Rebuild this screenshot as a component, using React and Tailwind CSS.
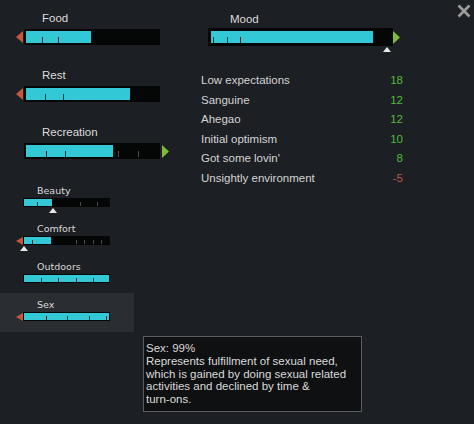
import React from "react";

const SANS = { fontFamily: '"Liberation Sans", Arial, sans-serif' };
const SMALL = { fontFamily: '"DejaVu Sans", Tahoma, sans-serif' };

const bigNeeds = [
  { label: "Food", fill: 65, ticks: [18, 34], arrow: "down" },
  { label: "Rest", fill: 104, ticks: [21, 39], arrow: "down" },
  { label: "Recreation", fill: 87, ticks: [22, 41, 94, 114], arrow: "up" },
];

const smallNeeds = [
  { label: "Beauty", fill: 28, ticks: [14, 57, 74], marker: 29 },
  { label: "Comfort", fill: 27, ticks: [9, 53, 61, 70, 78], marker: 0, arrow: "down" },
  { label: "Outdoors", fill: 85, ticks: [18, 35, 53, 70] },
  { label: "Sex", fill: 85, ticks: [23, 44, 66, 83], arrow: "down", active: true },
];

const thoughts = [
  ["Low expectations", 18],
  ["Sanguine", 12],
  ["Ahegao", 12],
  ["Initial optimism", 10],
  ["Got some lovin'", 8],
  ["Unsightly environment", -5],
];

function LeftArrow({ h }) {
  return (
    <svg width="7" height={h} viewBox={`0 0 7 ${h}`} className="block">
      <polygon points={`7,0 7,${h} 0,${h / 2}`} fill="#c9553f" />
    </svg>
  );
}

function RightArrow({ h }) {
  return (
    <svg width="7" height={h} viewBox={`0 0 7 ${h}`} className="block">
      <polygon points={`0,0 0,${h} 7,${h / 2}`} fill="#7cbb3c" />
    </svg>
  );
}

function Marker({ left, top }) {
  return (
    <svg
      width="8"
      height="5"
      viewBox="0 0 8 5"
      className="absolute"
      style={{ left: left - 4, top }}
    >
      <polygon points="4,0 8,5 0,5" fill="#e8e8e8" />
    </svg>
  );
}

function Bar({ w, h, inset, fill, ticks, tickH, marker }) {
  return (
    <div className="relative bg-[#050606]" style={{ width: w, height: h }}>
      <div
        className="absolute bg-[#32c8d6]"
        style={{ left: inset, top: inset, bottom: inset, width: fill }}
      />
      {ticks.map((t) => (
        <div
          key={t}
          className={`absolute w-px ${t < fill + inset ? "bg-[#0b2a2e]" : "bg-[#4a4c4e]"}`}
          style={{ left: t, bottom: inset, height: tickH }}
        />
      ))}
      {marker !== undefined && <Marker left={marker + inset} top={h + 1} />}
    </div>
  );
}

function BigNeed({ need }) {
  return (
    <div className="h-[57px] pt-[11px]">
      <div className="pl-[42px] h-[14px] leading-[14px] text-[11.5px] text-[#dcdcdc]" style={SANS}>
        {need.label}
      </div>
      <div className="mt-[4px] flex items-center">
        <div className="w-[24px] flex justify-end pr-[1px]">
          {need.arrow === "down" && <LeftArrow h={12} />}
        </div>
        <Bar w={136} h={16} inset={2} fill={need.fill} ticks={need.ticks} tickH={6} />
        <div className="pl-[2px]">{need.arrow === "up" && <RightArrow h={13} />}</div>
      </div>
    </div>
  );
}

function SmallNeed({ need }) {
  return (
    <div
      className={`h-[38px] pt-[6px] ${need.active ? "w-[134px] h-[39px] bg-[#2a2d31]" : ""}`}
    >
      <div className="pl-[37px] h-[11px] leading-[11px] text-[9.5px] text-[#dadada]" style={SMALL}>
        {need.label}
      </div>
      <div className="mt-[2px] flex items-center">
        <div className="w-[23px] flex justify-end">
          {need.arrow === "down" && <LeftArrow h={8} />}
        </div>
        <Bar
          w={87}
          h={9}
          inset={1}
          fill={need.fill}
          ticks={need.ticks}
          tickH={4}
          marker={need.marker}
        />
      </div>
    </div>
  );
}

export default function App() {
  return (
    <div className="w-[474px] h-[424px] bg-[#1c1f23] relative overflow-hidden flex" style={SANS}>
      {/* Needs column */}
      <div className="w-[190px] shrink-0">
        {bigNeeds.map((n) => (
          <BigNeed key={n.label} need={n} />
        ))}
        <div className="h-[8px]" />
        {smallNeeds.map((n) => (
          <SmallNeed key={n.label} need={n} />
        ))}
      </div>

      {/* Mood column */}
      <div className="pt-[12px] pl-[11px]">
        <div className="pl-[29px] h-[14px] leading-[14px] text-[11.5px] text-[#dcdcdc]">Mood</div>
        <div className="mt-[2px] ml-[7px] flex items-center">
          <Bar w={185} h={18} inset={3} fill={162} ticks={[5, 19, 32]} tickH={6} marker={176} />
          <RightArrow h={13} />
        </div>

        <div className="mt-[25px] w-[202px]">
          {thoughts.map(([t, v]) => (
            <div
              key={t}
              className="flex justify-between h-[19.6px] leading-[19.6px] text-[11.5px] text-[#d4d4d4]"
            >
              <span>{t}</span>
              <span className={v < 0 ? "text-[#b9584b]" : "text-[#52ba3c]"}>{v}</span>
            </div>
          ))}
        </div>
      </div>

      {/* Close */}
      <svg width="14" height="14" viewBox="0 0 14 14" className="absolute left-[457px] top-[4px]">
        <path d="M1.5 1.5 L12.5 12.5 M12.5 1.5 L1.5 12.5" stroke="#9c9c9c" strokeWidth="2.6" />
      </svg>

      {/* Tooltip */}
      <div className="absolute left-[143px] top-[336px] w-[219px] h-[76px] bg-[#0e1012] border border-[#5b5e61] px-[2px] pt-[5px] text-[11.5px] leading-[12.8px] text-[#dadada] whitespace-nowrap">
        <div>Sex: 99%</div>
        <div>Represents fulfillment of sexual need,</div>
        <div>which is gained by doing sexual related</div>
        <div>activities and declined by time &amp;</div>
        <div>turn-ons.</div>
      </div>
    </div>
  );
}
